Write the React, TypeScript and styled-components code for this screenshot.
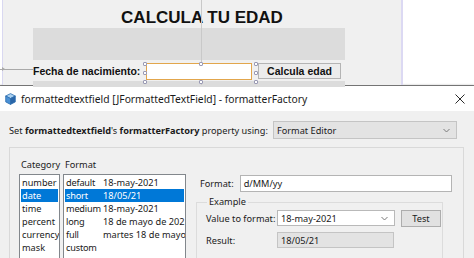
import React from 'react';
import styled, { createGlobalStyle } from 'styled-components';

const GlobalStyle = createGlobalStyle`
  html, body {
    margin: 0;
    padding: 0;
    background: #ffffff;
  }
  body {
    width: 474px;
    height: 258px;
    overflow: hidden;
  }
`;

const Page = styled.div`
  width: 474px;
  height: 258px;
  display: flex;
  flex-direction: column;
  overflow: hidden;
`;

/* ---------- form designer ---------- */

const Designer = styled.div`
  height: 86px;
  flex: none;
  display: flex;
  background: #ffffff;
  border-bottom: 1px solid #8c8c8c;
  box-sizing: border-box;
`;

const Canvas = styled.div`
  position: relative;
  width: 398px;
  margin-left: 2px;
  background: #f0f0f0;
  border-left: 1px solid #d9d8f1;
  border-right: 2px solid #dcd9f3;
  box-sizing: content-box;
  display: flex;
  flex-direction: column;
  font-family: 'Liberation Sans', Arial, sans-serif;
  color: #111111;

  &::before {
    content: '';
    position: absolute;
    left: 198px;
    top: 0;
    bottom: 0;
    width: 1px;
    background: #c9c9c9;
  }
`;

const HGuide = styled.div`
  position: absolute;
  left: -3px;
  top: 69px;
  width: 34px;
  height: 1px;
  background: #a9a9a9;

  &::before {
    content: '';
    position: absolute;
    left: 2px;
    top: -2px;
    border-left: 3px solid #a9a9a9;
    border-top: 2px solid transparent;
    border-bottom: 2px solid transparent;
  }
`;

const Title = styled.h1`
  margin: 7px 0 0;
  height: 21px;
  font-size: 17px;
  line-height: 21px;
  font-weight: 700;
  text-align: center;
`;

const FormArea = styled.div`
  margin-left: 30px;
  width: 312px;
  display: flex;
  flex-direction: column;
`;

const GreyPanel = styled.div<{ $h: number }>`
  height: ${(p) => p.$h}px;
  background: #dcdcdc;
`;

const FormRow = styled.div`
  height: 20px;
  margin-top: 1px;
  display: flex;
  align-items: center;
`;

const FieldLabel = styled.label`
  width: 113px;
  font-size: 10.5px;
  font-weight: 700;
  white-space: nowrap;
`;

const SelectedField = styled.div`
  position: relative;
  width: 106px;
  height: 17px;
  box-sizing: border-box;
  border: 1px solid #e2a64c;
  background: #ffffff;
`;

const Handle = styled.span<{ $x: number; $y: number }>`
  position: absolute;
  left: ${(p) => p.$x}px;
  top: ${(p) => p.$y}px;
  width: 4px;
  height: 4px;
  box-sizing: border-box;
  border: 1px solid #9a9ab4;
  background: #ffffff;
  border-radius: 1px;
`;

const DesignButton = styled.button`
  margin-left: 6px;
  width: 83px;
  height: 16px;
  padding: 0;
  box-sizing: border-box;
  border: 1px solid #b4b4b4;
  background: #ececec;
  font-family: 'Liberation Sans', Arial, sans-serif;
  font-size: 10.5px;
  font-weight: 700;
  color: #111111;
`;

const WhiteArea = styled.div`
  flex: 1;
  background: #ffffff;
`;

/* ---------- dialog ---------- */

const Dialog = styled.div`
  flex: 1;
  display: flex;
  flex-direction: column;
  background: #f0f0f0;
  font-family: 'Noto Sans', 'Liberation Sans', sans-serif;
  color: #1a1a1a;
  box-shadow: 0 -1px 2px rgba(0, 0, 0, 0.25);
`;

const TitleBar = styled.div`
  height: 25px;
  flex: none;
  display: flex;
  align-items: center;
  padding: 0 9px 0 5px;
  background: #ffffff;
`;

const TitleText = styled.span`
  margin-left: 5px;
  font-size: 10.3px;
  color: #1a1a1a;
  white-space: nowrap;
`;

const CloseButton = styled.span`
  margin-left: auto;
  display: flex;
`;

const Body = styled.div`
  flex: 1;
  padding: 0 10px 0 9px;
  display: flex;
  flex-direction: column;
`;

const SetRow = styled.div`
  margin-top: 10px;
  height: 18px;
  display: flex;
  align-items: center;
  font-size: 9.2px;
  white-space: nowrap;

  b {
    font-weight: 700;
  }
`;

const Combo = styled.div<{ $w: number; $grey?: boolean }>`
  width: ${(p) => p.$w}px;
  height: 100%;
  box-sizing: border-box;
  display: flex;
  align-items: center;
  justify-content: space-between;
  padding: 0 6px 0 3px;
  border: 1px solid ${(p) => (p.$grey ? '#c4c4c4' : '#b9b9b9')};
  background: ${(p) => (p.$grey ? '#e3e3e3' : '#ffffff')};
  font-size: 9.2px;
  white-space: nowrap;
`;

const SetCombo = styled(Combo)`
  margin-left: auto;
  margin-right: 7px;
`;

const Group = styled.div`
  margin-top: 8px;
  flex: 1;
  display: flex;
  padding: 0 10px 0 9px;
  border: 1px solid #d9d9d9;
  border-bottom: none;
  font-size: 9.2px;
`;

const ListColumn = styled.div<{ $w: number }>`
  width: ${(p) => p.$w}px;
  display: flex;
  flex-direction: column;
  margin-right: 3px;
`;

const Heading = styled.div`
  margin-top: 10px;
  height: 14px;
  line-height: 14px;
  padding-left: 2px;
  white-space: nowrap;
`;

const List = styled.ul`
  margin: 2px 0 0;
  padding: 1px;
  flex: 1;
  list-style: none;
  overflow: hidden;
  background: #ffffff;
  border: 1px solid #82878c;
  border-bottom: none;
`;

const Item = styled.li<{ $selected?: boolean }>`
  height: 13px;
  line-height: 13px;
  padding-left: 1px;
  display: flex;
  white-space: nowrap;
  background: ${(p) => (p.$selected ? '#0078d7' : 'transparent')};
  color: ${(p) => (p.$selected ? '#ffffff' : '#1a1a1a')};
`;

const ItemName = styled.span`
  width: 37px;
  flex: none;
  letter-spacing: -0.2px;
`;

const RightPane = styled.div`
  flex: 1;
  margin-left: 11px;
  padding-top: 27px;
  display: flex;
  flex-direction: column;
`;

const FormatRow = styled.div`
  height: 17px;
  display: flex;
  align-items: center;
  gap: 6px;
`;

const TextInput = styled.div`
  flex: 1;
  height: 100%;
  box-sizing: border-box;
  display: flex;
  align-items: center;
  padding-left: 3px;
  margin-right: 1px;
  background: #ffffff;
  border: 1px solid #b4b4b4;
`;

const Example = styled.fieldset`
  margin: 4px 10px 0 -4px;
  padding: 2px 0 0 9px;
  flex: 1;
  border: 1px solid #dcdcdc;
  border-bottom: none;
  display: grid;
  grid-template-columns: 71px auto auto;
  grid-auto-rows: 16px;
  row-gap: 6px;
  align-items: center;
  justify-items: start;
  align-content: start;
  white-space: nowrap;

  legend {
    padding: 0 2px;
    margin-left: 1px;
    line-height: 12px;
  }
`;

const TestButton = styled.button`
  margin-left: 5px;
  width: 40px;
  height: 17px;
  padding: 0;
  border: 1px solid #adadad;
  background: #e1e1e1;
  font-family: 'Noto Sans', 'Liberation Sans', sans-serif;
  font-size: 9.2px;
  color: #1a1a1a;
`;

const CubeIcon = () => (
  <svg width="11" height="12" viewBox="0 0 11 12">
    <path d="M5.5 0.6 L10.3 3 L5.5 5.5 L0.7 3 Z" fill="#a9d0f0" stroke="#2d6fb0" strokeWidth="0.8" />
    <path d="M0.7 3 L5.5 5.5 L5.5 11.4 L0.7 8.9 Z" fill="#4a90d4" stroke="#2d6fb0" strokeWidth="0.8" />
    <path d="M5.5 5.5 L10.3 3 L10.3 8.9 L5.5 11.4 Z" fill="#2a66a8" stroke="#2d6fb0" strokeWidth="0.8" />
  </svg>
);

const CloseIcon = () => (
  <svg width="10" height="10" viewBox="0 0 10 10">
    <path d="M0.5 0.5 L9.5 9.5 M9.5 0.5 L0.5 9.5" stroke="#2b2b2b" strokeWidth="1" />
  </svg>
);

const Chevron = () => (
  <svg width="7" height="5" viewBox="0 0 7 5">
    <path d="M0.5 1 L3.5 4 L6.5 1" fill="none" stroke="#7a7a7a" strokeWidth="1" />
  </svg>
);

const categories = ['number', 'date', 'time', 'percent', 'currency', 'mask'];

const formats: [string, string][] = [
  ['default', '18-may-2021'],
  ['short', '18/05/21'],
  ['medium', '18-may-2021'],
  ['long', '18 de mayo de 2021'],
  ['full', 'martes 18 de mayo de 2021'],
  ['custom', ''],
];

const handles: [number, number][] = [
  [-4, -2], [52, -2], [107, -2],
  [-4, 7], [107, 7],
  [-4, 16], [52, 16], [107, 16],
];

export default function App() {
  return (
    <>
      <GlobalStyle />
      <Page>
        <Designer>
          <Canvas>
            <HGuide />
            <Title>CALCULA TU EDAD</Title>
            <FormArea>
              <GreyPanel $h={32} />
              <FormRow>
                <FieldLabel>Fecha de nacimiento:</FieldLabel>
                <SelectedField>
                  {handles.map(([x, y], i) => (
                    <Handle key={i} $x={x} $y={y} />
                  ))}
                </SelectedField>
                <DesignButton>Calcula edad</DesignButton>
              </FormRow>
              <GreyPanel $h={6} />
            </FormArea>
          </Canvas>
          <WhiteArea />
        </Designer>

        <Dialog>
          <TitleBar>
            <CubeIcon />
            <TitleText>formattedtextfield [JFormattedTextField] - formatterFactory</TitleText>
            <CloseButton>
              <CloseIcon />
            </CloseButton>
          </TitleBar>
          <Body>
            <SetRow>
              <span>
                Set <b>formattedtextfield</b>'s <b>formatterFactory</b> property using:
              </span>
              <SetCombo $w={184} $grey>
                Format Editor
                <Chevron />
              </SetCombo>
            </SetRow>
            <Group>
              <ListColumn $w={41}>
                <Heading>Category</Heading>
                <List>
                  {categories.map((c) => (
                    <Item key={c} $selected={c === 'date'}>
                      {c}
                    </Item>
                  ))}
                </List>
              </ListColumn>
              <ListColumn $w={123}>
                <Heading>Format</Heading>
                <List>
                  {formats.map(([name, value]) => (
                    <Item key={name} $selected={name === 'short'}>
                      <ItemName>{name}</ItemName>
                      {value}
                    </Item>
                  ))}
                </List>
              </ListColumn>
              <RightPane>
                <FormatRow>
                  <span>Format:</span>
                  <TextInput>d/MM/yy</TextInput>
                </FormatRow>
                <Example>
                  <legend>Example</legend>
                  <span>Value to format:</span>
                  <Combo $w={118}>
                    18-may-2021
                    <Chevron />
                  </Combo>
                  <TestButton>Test</TestButton>
                  <span>Result:</span>
                  <Combo $w={117} $grey>
                    18/05/21
                  </Combo>
                </Example>
              </RightPane>
            </Group>
          </Body>
        </Dialog>
      </Page>
    </>
  );
}
